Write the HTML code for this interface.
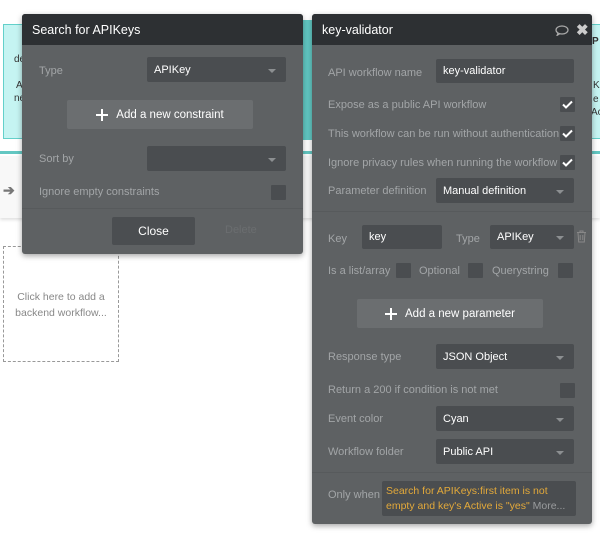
<!DOCTYPE html>
<html><head><meta charset="utf-8"><style>
*{box-sizing:border-box;margin:0;padding:0}
body{width:600px;height:536px;background:#fff;position:relative;overflow:hidden;font-family:"Liberation Sans",sans-serif;font-size:11px;color:#fff}
.a{position:absolute}
.panel{position:absolute;background:#5e6163;border-radius:3px;box-shadow:0 2px 6px rgba(0,0,0,.35);overflow:hidden}
.hdr{position:absolute;left:0;right:0;top:0;height:31px;background:#2d3033;font-size:12.5px;padding:9px 10px}
.lbl{position:absolute;color:#a2a5a7;font-size:11px;margin-top:1px}
.inp{position:absolute;background:#4a4d50;border-radius:2px;color:#fff;font-size:11px;padding-left:7px;display:flex;align-items:center}
.dd::after{content:"";position:absolute;right:10px;top:50%;margin-top:-1px;border-left:4px solid transparent;border-right:4px solid transparent;border-top:4px solid #8c8f91}
.cb{position:absolute;width:15px;height:15px;background:#4a4d50;border-radius:1px}
.cb svg{position:absolute;left:2px;top:3px}
.btn{position:absolute;background:#6b6e70;border-radius:2px;color:#fff;font-size:11.5px;display:flex;align-items:center;justify-content:center}
.btn svg{margin-right:8px}
.sep{position:absolute;left:0;right:0;height:1px;background:#575a5c}
</style></head><body>
<div class="a" style="left:3px;top:24px;width:600px;height:115px;background:#c5f4f2;border:1px solid #63d0ca"></div>
<div class="a" style="left:303px;top:20px;width:9px;height:120px;background:#62c8c3"></div>
<div class="a" style="left:14px;top:54px;font-size:10px;color:#333">de</div>
<div class="a" style="left:16px;top:80px;font-size:10px;color:#333">A</div>
<div class="a" style="left:14px;top:93px;font-size:10px;color:#333">ne</div>
<div class="a" style="left:592px;top:36px;font-size:10px;color:#333;font-weight:bold">P</div>
<div class="a" style="left:593px;top:80px;font-size:10px;color:#333">K</div>
<div class="a" style="left:593px;top:94px;font-size:10px;color:#333">e</div>
<div class="a" style="left:591px;top:107px;font-size:10px;color:#333">Ac</div>
<div class="a" style="left:0;top:151px;width:600px;height:3px;background:#63c7c2"></div>
<div class="a" style="left:0;top:156px;width:600px;height:62px;background:#f8f8f8;box-shadow:0 2px 3px rgba(0,0,0,.12)"></div>
<div class="a" style="left:3px;top:182px;font-size:14px;color:#777;font-weight:bold">➔</div>
<div class="a" style="left:3px;top:246px;width:116px;height:116px;border:1px dashed #999;color:#888;font-size:10.5px;text-align:center;padding-top:42px;line-height:16px">Click here to add a<br>backend workflow...</div>

<div class="panel" style="left:22px;top:14px;width:281px;height:240px">
<div class="hdr">Search for APIKeys</div>
<div class="lbl" style="left:17px;top:50px">Type</div>
<div class="inp dd" style="left:125px;top:43px;width:139px;height:25px">APIKey</div>
<div class="btn" style="left:45px;top:86px;width:186px;height:29px"><svg width="12" height="12" viewBox="0 0 12 12"><path d="M6 0v12M0 6h12" stroke="#fff" stroke-width="2"/></svg>Add a new constraint</div>
<div class="lbl" style="left:17px;top:138px">Sort by</div>
<div class="inp dd" style="left:125px;top:132px;width:139px;height:25px"></div>
<div class="lbl" style="left:17px;top:171px">Ignore empty constraints</div>
<div class="cb" style="left:249px;top:171px"></div>
<div class="sep" style="top:194px"></div>
<div class="btn" style="left:90px;top:203px;width:83px;height:28px;background:#4b4e51;font-size:12px">Close</div>
<div class="a" style="left:203px;top:210px;color:#6b6e70;font-size:11px">Delete</div>
</div>

<div class="panel" style="left:312px;top:14px;width:280px;height:510px">
<div class="hdr">key-validator</div>
<svg class="a" style="left:243px;top:11px" width="14" height="11" viewBox="0 0 14 11"><ellipse cx="7" cy="5" rx="6" ry="4" fill="none" stroke="#aaa" stroke-width="1.2"/><path d="M3 8 L2 10.5 L5 8.6" fill="none" stroke="#aaa" stroke-width="1.1"/></svg>
<div class="a" style="left:264px;top:7px;font-size:15px;font-weight:bold;color:#ccc">✖</div>
<div class="lbl" style="left:16px;top:52px">API workflow name</div>
<div class="inp" style="left:124px;top:45px;width:138px;height:24px">key-validator</div>
<div class="lbl" style="left:16px;top:84px">Expose as a public API workflow</div>
<div class="cb" style="left:248px;top:83px"><svg width="11" height="9" viewBox="0 0 11 9"><path d="M1 4.5l3 3L10 1.5" fill="none" stroke="#fff" stroke-width="2"/></svg></div>
<div class="lbl" style="left:16px;top:113px">This workflow can be run without authentication</div>
<div class="cb" style="left:248px;top:112px"><svg width="11" height="9" viewBox="0 0 11 9"><path d="M1 4.5l3 3L10 1.5" fill="none" stroke="#fff" stroke-width="2"/></svg></div>
<div class="lbl" style="left:16px;top:142px">Ignore privacy rules when running the workflow</div>
<div class="cb" style="left:248px;top:141px"><svg width="11" height="9" viewBox="0 0 11 9"><path d="M1 4.5l3 3L10 1.5" fill="none" stroke="#fff" stroke-width="2"/></svg></div>
<div class="lbl" style="left:16px;top:170px">Parameter definition</div>
<div class="inp dd" style="left:124px;top:164px;width:138px;height:25px">Manual definition</div>
<div class="sep" style="top:197px"></div>
<div class="lbl" style="left:16px;top:218px">Key</div>
<div class="inp" style="left:50px;top:211px;width:80px;height:24px">key</div>
<div class="lbl" style="left:144px;top:218px">Type</div>
<div class="inp dd" style="left:178px;top:211px;width:84px;height:24px">APIKey</div>
<svg class="a" style="left:264px;top:216px" width="11" height="13" viewBox="0 0 11 13"><path d="M1 2.5h9M4 2.5V1h3v1.5M2 2.5l.7 9.5h5.6l.7-9.5M4.2 5v5M6.8 5v5" fill="none" stroke="#888" stroke-width="1"/></svg>
<div class="lbl" style="left:16px;top:250px">Is a list/array</div>
<div class="cb" style="left:84px;top:249px"></div>
<div class="lbl" style="left:107px;top:250px">Optional</div>
<div class="cb" style="left:156px;top:249px"></div>
<div class="lbl" style="left:180px;top:250px">Querystring</div>
<div class="cb" style="left:246px;top:249px"></div>
<div class="btn" style="left:45px;top:285px;width:186px;height:29px"><svg width="12" height="12" viewBox="0 0 12 12"><path d="M6 0v12M0 6h12" stroke="#fff" stroke-width="2"/></svg>Add a new parameter</div>
<div class="lbl" style="left:16px;top:336px">Response type</div>
<div class="inp dd" style="left:124px;top:330px;width:138px;height:25px">JSON Object</div>
<div class="lbl" style="left:16px;top:369px">Return a 200 if condition is not met</div>
<div class="cb" style="left:248px;top:369px"></div>
<div class="lbl" style="left:16px;top:398px">Event color</div>
<div class="inp dd" style="left:124px;top:392px;width:138px;height:25px">Cyan</div>
<div class="lbl" style="left:16px;top:431px">Workflow folder</div>
<div class="inp dd" style="left:124px;top:425px;width:138px;height:25px">Public API</div>
<div class="sep" style="top:458px"></div>
<div class="lbl" style="left:16px;top:474px">Only when</div>
<div class="a" style="left:70px;top:467px;width:194px;height:35px;background:#4a4d50;border-radius:2px;color:#e3a93a;font-size:10.5px;line-height:15px;padding:3px 4px">Search for APIKeys:first item is not empty and key's Active is "yes" <span style="color:#9a9c9e">More...</span></div>
</div>
</body></html>
